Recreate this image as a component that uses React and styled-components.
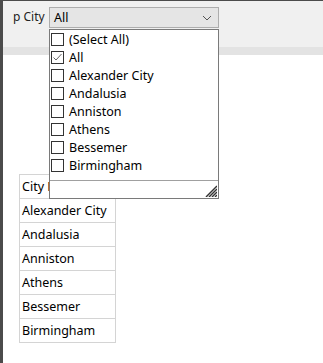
import React from "react";
import styled, { createGlobalStyle } from "styled-components";

const cities = ["Alexander City", "Andalusia", "Anniston", "Athens", "Bessemer", "Birmingham"];
const options = [
  { label: "(Select All)", checked: false },
  { label: "All", checked: true },
  ...cities.map((c) => ({ label: c, checked: false })),
];

export default function App() {
  return (
    <>
      <GlobalStyle />
      <Frame>
        <Toolbar>
          <Label>p City</Label>
          <SelectWrap>
            <Select>
              <span>All</span>
              <svg width="10" height="6" viewBox="0 0 10 6">
                <path d="M1 1 L5 5 L9 1" fill="none" stroke="#555" strokeWidth="1" />
              </svg>
            </Select>
            <Dropdown>
              <OptionList>
                {options.map((o) => (
                  <Option key={o.label}>
                    <Box>
                      {o.checked && (
                        <svg width="11" height="11" viewBox="0 0 11 11">
                          <path d="M1.5 5.5 L4 8 L9.5 2" fill="none" stroke="#666" strokeWidth="1" />
                        </svg>
                      )}
                    </Box>
                    {o.label}
                  </Option>
                ))}
              </OptionList>
              <Footer>
                <svg width="12" height="12" viewBox="0 0 12 12">
                  {[1, 4, 7, 10].map((d) => (
                    <path key={d} d={`M${d} 12 L12 ${d}`} stroke="#333" strokeWidth="1.4" />
                  ))}
                </svg>
              </Footer>
            </Dropdown>
          </SelectWrap>
        </Toolbar>
        <Strip />
        <Content>
          <Table>
            <tbody>
              <tr>
                <Cell>City Name</Cell>
              </tr>
              {cities.map((c) => (
                <tr key={c}>
                  <Cell>{c}</Cell>
                </tr>
              ))}
            </tbody>
          </Table>
        </Content>
      </Frame>
    </>
  );
}

const GlobalStyle = createGlobalStyle`
  body {
    margin: 0;
    background: #fff;
    font-family: "Noto Sans", "Open Sans", sans-serif;
    font-size: 12.5px;
    color: #000;
  }
`;

const Frame = styled.div`
  display: flex;
  flex-direction: column;
  height: 362px;
  border-left: 3px solid #4b4b4b;
  border-top: 1px solid #4b4b4b;
  overflow: hidden;
`;

const Toolbar = styled.div`
  display: flex;
  align-items: flex-start;
  height: 46px;
  padding: 6px 0 0 10px;
  box-sizing: border-box;
  background: #f0f0f0;
`;

const Label = styled.div`
  width: 36px;
  flex-shrink: 0;
  font-size: 12px;
  line-height: 20px;
  color: #222;
  white-space: nowrap;
`;

const SelectWrap = styled.div`
  position: relative;
  z-index: 2;
`;

const Select = styled.div`
  display: flex;
  align-items: center;
  justify-content: space-between;
  width: 170px;
  height: 21px;
  box-sizing: border-box;
  padding: 0 6px 0 4px;
  background: #e5e5e5;
  border: 1px solid #adadad;
`;

const Dropdown = styled.div`
  position: absolute;
  left: 0;
  top: 22px;
  width: 170px;
  height: 170px;
  box-sizing: border-box;
  display: flex;
  flex-direction: column;
  background: #fff;
  border: 1px solid #7a7a7a;
`;

const OptionList = styled.div`
  flex: 1;
  display: flex;
  flex-direction: column;
`;

const Option = styled.div`
  display: flex;
  align-items: center;
  gap: 5px;
  height: 18px;
  padding-left: 1px;
  white-space: nowrap;
`;

const Box = styled.div`
  display: flex;
  align-items: center;
  justify-content: center;
  width: 13px;
  height: 13px;
  box-sizing: border-box;
  border: 1px solid #333;
  background: #fff;
`;

const Footer = styled.div`
  display: flex;
  justify-content: flex-end;
  align-items: flex-end;
  height: 18px;
  box-sizing: border-box;
  border-top: 1px solid #a0a0a0;
  padding: 0 1px 1px 0;
`;

const Strip = styled.div`
  height: 8px;
  background: #e3e3e3;
`;

const Content = styled.div`
  padding: 119px 0 0 16px;
`;

const Table = styled.table`
  border-collapse: collapse;
  width: 97px;
`;

const Cell = styled.td`
  height: 24px;
  box-sizing: border-box;
  padding: 0 2px;
  border: 1px solid #d4d4d4;
  white-space: nowrap;
  overflow: hidden;
  max-width: 97px;
`;
